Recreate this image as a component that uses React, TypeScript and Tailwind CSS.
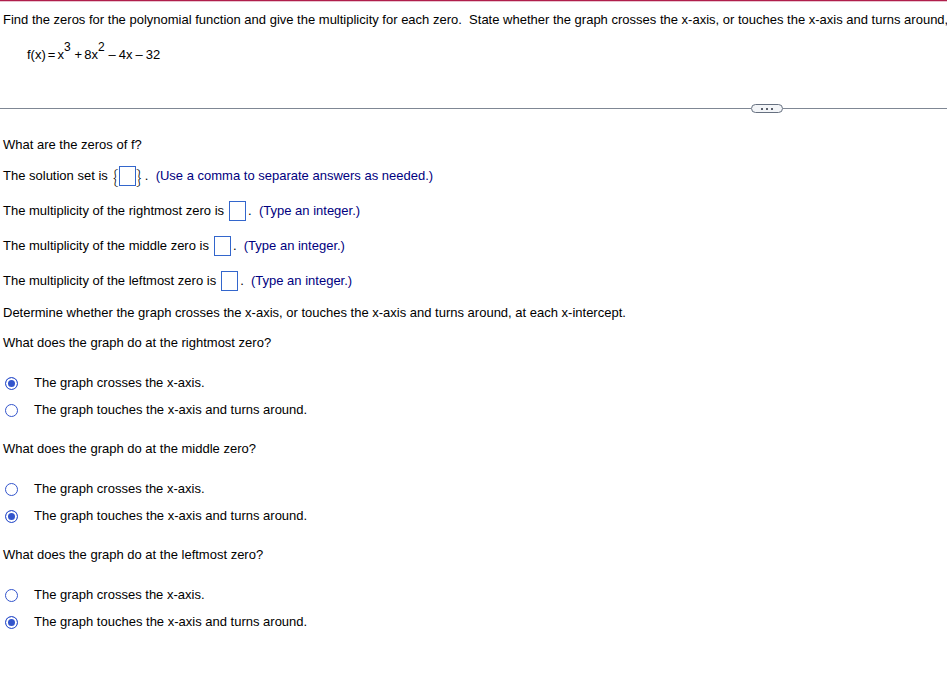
import React from "react";

const boxClass =
  "h-5 w-[17px] shrink-0 border border-[#3366cc] bg-white p-0 text-center text-[13px] outline-none";

function Multiplicity({ which }: { which: string }) {
  const id = `multiplicity-${which}`;
  return (
    <div className="flex items-center">
      <label htmlFor={id}>The multiplicity of the {which} zero is</label>
      <input id={id} type="text" className={`${boxClass} ml-[5px] mr-0.5`} />
      <span className="whitespace-pre">
        .{"  "}
        <span className="text-[#000080]">(Type an integer.)</span>
      </span>
    </div>
  );
}

const options = [
  { value: "crosses", label: "The graph crosses the x-axis." },
  { value: "touches", label: "The graph touches the x-axis and turns around." },
];

function Behaviour({ which, answer }: { which: string; answer: string }) {
  return (
    <fieldset>
      <legend className="mb-5">What does the graph do at the {which} zero?</legend>
      <div className="flex flex-col gap-[7px]">
        {options.map((option) => (
          <label key={option.value} className="flex items-center gap-4 pl-0.5">
            <input
              type="radio"
              name={`behaviour-${which}`}
              value={option.value}
              defaultChecked={option.value === answer}
              className="size-[13px] shrink-0 appearance-none rounded-full border border-[#3355cc] bg-white checked:bg-[#3355cc] checked:shadow-[inset_0_0_0_2px_white]"
            />
            <span>{option.label}</span>
          </label>
        ))}
      </div>
    </fieldset>
  );
}

export default function App() {
  return (
    <main className="min-h-screen overflow-x-hidden border-t border-[#b01e4b] bg-white font-['Liberation_Sans',Arial,sans-serif] text-[13px] leading-5 text-black shadow-[inset_0_1px_0_#e9c3cf]">
      <header className="whitespace-pre pl-[3px] pt-[9px]">
        <p>
          Find the zeros for the polynomial function and give the multiplicity for each zero.{"  "}State whether the graph
          {" "}crosses the x-axis, or touches the x-axis and turns around,
        </p>
        <p className="mt-[15px] flex pl-6">
          <span>f(x)</span>
          <span className="mx-0.5">=</span>
          <span>x</span>
          <span className="-mt-2 text-[12px]">3</span>
          <span className="ml-1 mr-0.5">+</span>
          <span>8x</span>
          <span className="-mt-2 text-[12px]">2</span>
          <span className="ml-1 mr-[3px]">–</span>
          <span>4x</span>
          <span className="mx-[3px]">–</span>
          <span>32</span>
        </p>
      </header>

      <div className="mt-[39px] flex items-center">
        <div className="h-px grow bg-[#7f8794]" />
        <button
          type="button"
          aria-label="Resize panels"
          className="flex h-[9px] w-8 items-center justify-center gap-[3px] rounded-full border border-[#667080] bg-[#f3f5f8]"
        >
          <span className="size-0.5 bg-[#5a606c]" />
          <span className="size-0.5 bg-[#5a606c]" />
          <span className="size-0.5 bg-[#5a606c]" />
        </button>
        <div className="h-px w-[164px] bg-[#7f8794]" />
      </div>

      <section className="whitespace-nowrap pl-[3px] pt-[22px]">
        <p>What are the zeros of f?</p>
        <div className="mt-[11px] flex items-center">
          <label htmlFor="solution-set">The solution set is</label>
          <span className="ml-[5px] w-[6px] font-['Lato'] text-[20px] font-light">{"{"}</span>
          <input id="solution-set" type="text" className={boxClass} />
          <span className="mr-[3px] w-[6px] font-['Lato'] text-[20px] font-light">{"}"}</span>
          <span className="whitespace-pre">
            .{"  "}
            <span className="text-[#000080]">(Use a comma to separate answers as needed.)</span>
          </span>
        </div>
        <div className="mt-[15px] flex flex-col gap-[15px]">
          <Multiplicity which="rightmost" />
          <Multiplicity which="middle" />
          <Multiplicity which="leftmost" />
        </div>
        <p className="mt-3">
          Determine whether the graph crosses the x-axis, or touches the x-axis and turns around, at each x-intercept.
        </p>
        <div className="mt-[10px] flex flex-col gap-[19px]">
          <Behaviour which="rightmost" answer="crosses" />
          <Behaviour which="middle" answer="touches" />
          <Behaviour which="leftmost" answer="touches" />
        </div>
      </section>
    </main>
  );
}
